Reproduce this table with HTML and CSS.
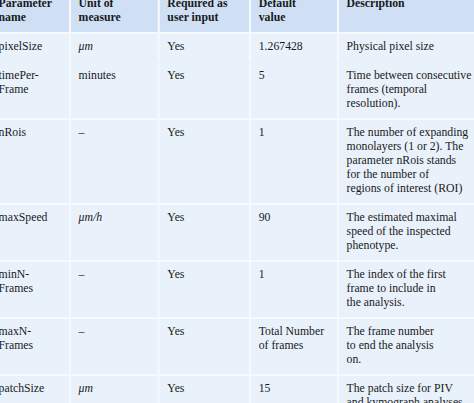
FILE: index.html
```html
<!DOCTYPE html>
<html>
<head>
<meta charset="utf-8">
<link rel="stylesheet" href="styles.css">
</head>
<body>
<table class="params">
  <colgroup>
    <col class="c-name">
    <col class="c-unit">
    <col class="c-req">
    <col class="c-def">
    <col class="c-desc">
  </colgroup>
  <thead>
    <tr>
      <th>Parameter<br>name</th>
      <th>Unit of<br>measure</th>
      <th>Required as<br>user input</th>
      <th>Default<br>value</th>
      <th>Description</th>
    </tr>
  </thead>
  <tbody>
    <tr class="no-line">
      <td>pixelSize</td>
      <td><i>μm</i></td>
      <td>Yes</td>
      <td>1.267428</td>
      <td>Physical pixel size</td>
    </tr>
    <tr>
      <td>timePer-<br>Frame</td>
      <td>minutes</td>
      <td>Yes</td>
      <td>5</td>
      <td>Time between consecutive<br>frames (temporal<br>resolution).</td>
    </tr>
    <tr>
      <td>nRois</td>
      <td>–</td>
      <td>Yes</td>
      <td>1</td>
      <td>The number of expanding<br>monolayers (1 or 2). The<br>parameter nRois stands<br>for the number of<br>regions of interest (ROI)</td>
    </tr>
    <tr>
      <td>maxSpeed</td>
      <td><i>μm/h</i></td>
      <td>Yes</td>
      <td>90</td>
      <td>The estimated maximal<br>speed of the inspected<br>phenotype.</td>
    </tr>
    <tr>
      <td>minN-<br>Frames</td>
      <td>–</td>
      <td>Yes</td>
      <td>1</td>
      <td>The index of the first<br>frame to include in<br>the analysis.</td>
    </tr>
    <tr>
      <td>maxN-<br>Frames</td>
      <td>–</td>
      <td>Yes</td>
      <td>Total Number<br>of frames</td>
      <td>The frame number<br>to end the analysis<br>on.</td>
    </tr>
    <tr>
      <td>patchSize</td>
      <td><i>μm</i></td>
      <td>Yes</td>
      <td>15</td>
      <td>The patch size for PIV<br>and kymograph analyses</td>
    </tr>
  </tbody>
</table>
</body>
</html>
```
FILE: styles.css
```css
html, body {
  margin: 0;
  padding: 0;
  overflow: hidden;
  background: #e9f1fb;
}
body {
  width: 474px;
  height: 403px;
  font-family: "Liberation Serif", "Times New Roman", serif;
  color: #1a1a1a;
  font-size: 13.5px;
  line-height: 14px;
}
.params {
  border-collapse: collapse;
  table-layout: fixed;
  width: 600px;
  margin-left: -11px;
  margin-top: -9px;
  background: #e9f1fb;
  transform: scaleX(0.87);
  transform-origin: 0 0;
}
.c-name { width: 92px; }
.c-unit { width: 102px; }
.c-req { width: 105px; }
.c-def { width: 101px; }
.c-desc { width: 200px; }
.params th,
.params td {
  text-align: left;
  vertical-align: top;
  padding: 5px 4px 8px 9px;
  border: 2px solid #f7faff;
  white-space: nowrap;
  overflow: hidden;
}
.params th {
  background: #cfe0f4;
  font-weight: bold;
  border-top: none;
}
.params tr.no-line td {
  border-bottom-color: #e9f1fb;
}
.params i {
  font-style: italic;
}
```
